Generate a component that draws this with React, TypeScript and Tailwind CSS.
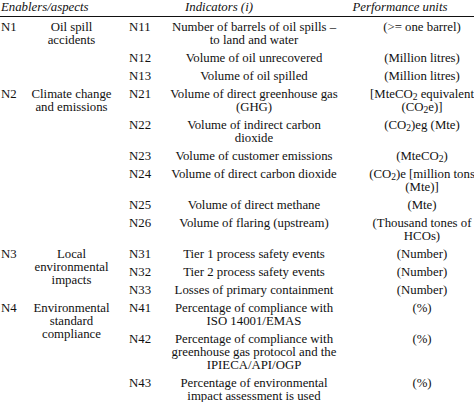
import React from "react";

type Indicator = {
  code: string;
  text: React.ReactNode[];
  units: React.ReactNode[];
};

type Group = {
  code: string;
  aspect: string[];
  rows: Indicator[];
};

const CO2 = (
  <>
    CO<sub>2</sub>
  </>
);

const groups: Group[] = [
  {
    code: "N1",
    aspect: ["Oil spill", "accidents"],
    rows: [
      {
        code: "N11",
        text: ["Number of barrels of oil spills –", "to land and water"],
        units: ["(>= one barrel)"],
      },
      { code: "N12", text: ["Volume of oil unrecovered"], units: ["(Million litres)"] },
      { code: "N13", text: ["Volume of oil spilled"], units: ["(Million litres)"] },
    ],
  },
  {
    code: "N2",
    aspect: ["Climate change", "and emissions"],
    rows: [
      {
        code: "N21",
        text: ["Volume of direct greenhouse gas", "(GHG)"],
        units: [<>[Mte{CO2} equivalent</>, <>({CO2}e)]</>],
      },
      {
        code: "N22",
        text: ["Volume of indirect carbon", "dioxide"],
        units: [<>({CO2})eg (Mte)</>],
      },
      { code: "N23", text: ["Volume of customer emissions"], units: [<>(Mte{CO2})</>] },
      {
        code: "N24",
        text: ["Volume of direct carbon dioxide"],
        units: [<>({CO2})e [million tons</>, "(Mte)]"],
      },
      { code: "N25", text: ["Volume of direct methane"], units: ["(Mte)"] },
      {
        code: "N26",
        text: ["Volume of flaring (upstream)"],
        units: ["(Thousand tones of", "HCOs)"],
      },
    ],
  },
  {
    code: "N3",
    aspect: ["Local", "environmental", "impacts"],
    rows: [
      { code: "N31", text: ["Tier 1 process safety events"], units: ["(Number)"] },
      { code: "N32", text: ["Tier 2 process safety events"], units: ["(Number)"] },
      { code: "N33", text: ["Losses of primary containment"], units: ["(Number)"] },
    ],
  },
  {
    code: "N4",
    aspect: ["Environmental", "standard", "compliance"],
    rows: [
      {
        code: "N41",
        text: ["Percentage of compliance with", "ISO 14001/EMAS"],
        units: ["(%)"],
      },
      {
        code: "N42",
        text: [
          "Percentage of compliance with",
          "greenhouse gas protocol and the",
          "IPIECA/API/OGP",
        ],
        units: ["(%)"],
      },
      {
        code: "N43",
        text: ["Percentage of environmental", "impact assessment is used"],
        units: ["(%)"],
      },
    ],
  },
];

function Lines({ items }: { items: React.ReactNode[] }) {
  return (
    <>
      {items.map((item, i) => (
        <div key={i} className="whitespace-nowrap">
          {item}
        </div>
      ))}
    </>
  );
}

export default function App() {
  return (
    <div
      className="w-[474px] h-[402px] overflow-hidden bg-white text-[#111] text-[12.8px] leading-[13px]"
      style={{ fontFamily: '"Liberation Serif", "Times New Roman", serif' }}
    >
      {/* Header */}
      <div className="flex h-[17px] pt-[1px] border-b border-[#111] italic">
        <div className="w-[200px] pl-[1px] whitespace-nowrap">Enablers/aspects</div>
        <div className="w-[54px] text-center whitespace-nowrap">Indicators (i)</div>
        <div className="w-[94px]" />
        <div className="w-[148px] shrink-0 text-center whitespace-nowrap">Performance units</div>
      </div>

      {/* Body */}
      <div className="pt-[1px]">
        {groups.map((g) => (
          <div key={g.code} className="flex">
            <div className="w-[28px] shrink-0 pt-[2.5px] pl-[1px]">{g.code}</div>
            <div className="w-[87px] shrink-0 pt-[2.5px] text-center">
              <Lines items={g.aspect} />
            </div>
            <div className="flex flex-col">
              {g.rows.map((r) => (
                <div key={r.code} className="flex py-[2.5px]">
                  <div className="w-[45px] shrink-0 pl-[14px]">{r.code}</div>
                  <div className="w-[188px] shrink-0 flex flex-col items-center">
                    <Lines items={r.text} />
                  </div>
                  <div className="w-[148px] shrink-0 flex flex-col items-center">
                    <Lines items={r.units} />
                  </div>
                </div>
              ))}
            </div>
          </div>
        ))}
      </div>
    </div>
  );
}
